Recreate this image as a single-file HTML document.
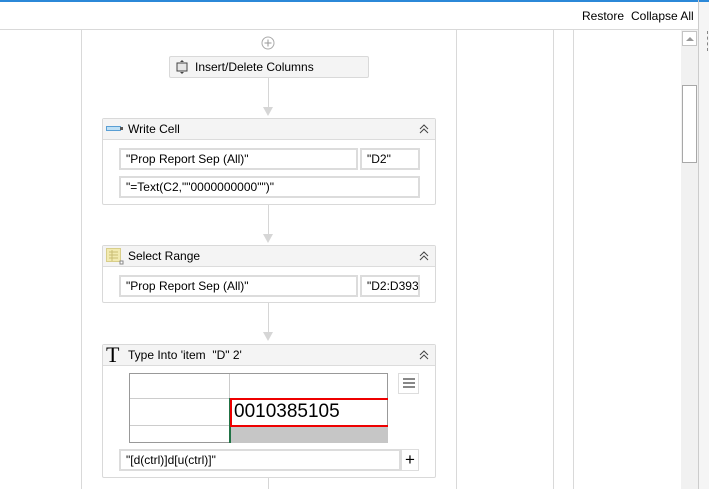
<!DOCTYPE html>
<html><head><meta charset="utf-8"><style>
*{margin:0;padding:0;box-sizing:border-box}
body{width:709px;height:489px;position:relative;overflow:hidden;background:#fff;font-family:"Liberation Sans",sans-serif;font-size:12px;color:#000}
.a{position:absolute}
.card{position:absolute;background:#fff;border:1px solid #d9d9d9;border-radius:2px}
.hd{position:absolute;left:0;right:0;top:0;height:21px;background:#f4f4f4;border-bottom:1px solid #dcdcdc}
.t{position:absolute;top:3px;font-size:12px}
.f{position:absolute;border:2px solid #dcdcdc;background:#fff;font-size:12px;padding:2px 0 0 5px;height:22px;white-space:nowrap;overflow:hidden}
.vl{position:absolute;width:1px;background:#d9d9d9;top:30px;bottom:0}
.ar{position:absolute;width:0;height:0;border-left:5px solid transparent;border-right:5px solid transparent;border-top:9px solid #d6d6d6}
.cl{position:absolute;width:1px;background:#d6d6d6;left:268px}
.chev{position:absolute;right:5px;top:4px}
</style></head><body>
<div class="a" style="left:0;top:0;width:709px;height:2px;background:#2b88d8"></div>
<div class="a" style="left:0;top:29px;width:698px;height:1px;background:#d9d9d9"></div>
<div class="a" style="left:582px;top:9px;font-size:12px">Restore</div>
<div class="a" style="left:631px;top:9px;font-size:12px">Collapse All</div>
<div class="vl" style="left:81px"></div>
<div class="vl" style="left:456px"></div>
<div class="vl" style="left:553px"></div>
<div class="vl" style="left:573px"></div>
<div class="a" style="left:681px;top:30px;width:17px;height:459px;background:#f1f1f1"></div>
<div class="a" style="left:682px;top:31px;width:15px;height:15px;border:1px solid #c4c4c4;background:#fff"></div>
<div class="a" style="left:686px;top:37px;width:0;height:0;border-left:4px solid transparent;border-right:4px solid transparent;border-bottom:4px solid #999"></div>
<div class="a" style="left:682px;top:85px;width:15px;height:78px;border:1px solid #a8a8a8;background:#fff"></div>
<div class="a" style="left:698px;top:0;width:1px;height:489px;background:#ccc"></div>
<div class="a" style="left:699px;top:2px;width:10px;height:487px;background:#f5f5f5"></div>
<div class="a" style="left:707px;top:31px;width:2px;height:20px;border-left:1px dashed #888"></div>

<svg class="a" style="left:261px;top:36px" width="14" height="14"><circle cx="7" cy="7" r="6" fill="none" stroke="#aaa"/><path d="M7 3.5v7M3.5 7h7" stroke="#999"/></svg>
<div class="card" style="left:169px;top:56px;width:200px;height:22px;background:#f4f4f4">
<svg class="a" style="left:4px;top:2px" width="16" height="16"><rect x="3" y="4" width="10" height="8" fill="#e6e6e6" stroke="#444"/><path d="M8 1l-2 2h4zM8 15l-2-2h4z" fill="#444"/></svg>
<div class="t" style="left:25px;top:3px">Insert/Delete Columns</div></div>
<div class="cl" style="top:78px;height:30px"></div><div class="ar" style="left:263px;top:107px"></div>

<div class="card" style="left:102px;top:118px;width:334px;height:87px">
<div class="hd"><svg class="a" style="left:3px;top:6px" width="18" height="8"><rect x="0.5" y="1.5" width="14" height="4" fill="#bfe0f5" stroke="#5a9fd4"/><rect x="14" y="2" width="3" height="3" fill="#555"/></svg>
<div class="t" style="left:25px">Write Cell</div>
<svg class="chev" width="12" height="12"><path d="M2 6l4-4 4 4M2 10l4-4 4 4" fill="none" stroke="#444"/></svg></div>
<div class="f" style="left:16px;top:29px;width:239px">"Prop Report Sep (All)"</div>
<div class="f" style="left:257px;top:29px;width:60px">"D2"</div>
<div class="f" style="left:16px;top:57px;width:301px">"=Text(C2,""0000000000"")"</div></div>
<div class="cl" style="top:205px;height:30px"></div><div class="ar" style="left:263px;top:234px"></div>

<div class="card" style="left:102px;top:245px;width:334px;height:58px">
<div class="hd"><svg class="a" style="left:3px;top:2px" width="18" height="17"><rect x="0.5" y="0.5" width="14" height="13" fill="#f2eab0" stroke="#d8ce8a"/><path d="M3 4h9M3 7h9M3 10h9M6 2v11" stroke="#c9bd74"/><rect x="14" y="13" width="3" height="3" fill="#fff" stroke="#888"/></svg>
<div class="t" style="left:25px">Select Range</div>
<svg class="chev" width="12" height="12"><path d="M2 6l4-4 4 4M2 10l4-4 4 4" fill="none" stroke="#444"/></svg></div>
<div class="f" style="left:16px;top:29px;width:239px">"Prop Report Sep (All)"</div>
<div class="f" style="left:257px;top:29px;width:60px">"D2:D393</div></div>
<div class="cl" style="top:303px;height:30px"></div><div class="ar" style="left:263px;top:332px"></div>

<div class="card" style="left:102px;top:344px;width:334px;height:134px">
<div class="hd"><div class="a" style="left:3px;top:-3px;font-family:'Liberation Serif',serif;font-size:22px">T</div>
<div class="t" style="left:25px">Type Into 'item&nbsp; "D" 2'</div>
<svg class="chev" width="12" height="12"><path d="M2 6l4-4 4 4M2 10l4-4 4 4" fill="none" stroke="#444"/></svg></div>
<div class="a" style="left:26px;top:28px;width:259px;height:70px;border:1px solid #999;background:#fff">
<div class="a" style="left:0;top:24px;width:100px;height:1px;background:#ccc"></div>
<div class="a" style="left:0;top:51px;width:100px;height:1px;background:#ccc"></div>
<div class="a" style="left:99px;top:0;width:1px;height:25px;background:#ccc"></div>
<div class="a" style="left:99px;top:24px;width:2px;height:45px;background:#217346"></div>
<div class="a" style="left:101px;top:52px;width:157px;height:17px;background:#c6c6c6"></div>
<div class="a" style="left:100px;top:24px;width:158px;height:29px;border:2px solid #e00;border-right:none;font-size:19px;padding:1px 0 0 2px">0010385105</div></div>
<div class="a" style="left:295px;top:28px;width:21px;height:21px;border:1px solid #ddd;background:#fff">
<div class="a" style="left:4px;top:4px;width:12px;height:2px;background:#888"></div>
<div class="a" style="left:4px;top:8px;width:12px;height:2px;background:#888"></div>
<div class="a" style="left:4px;top:12px;width:12px;height:2px;background:#888"></div></div>
<div class="f" style="left:16px;top:104px;width:282px">"[d(ctrl)]d[u(ctrl)]"</div>
<div class="a" style="left:298px;top:104px;width:18px;height:22px;border:1px solid #ddd;font-size:17px;text-align:center;line-height:19px">+</div></div>
<div class="cl" style="top:478px;height:11px"></div>
</body></html>
